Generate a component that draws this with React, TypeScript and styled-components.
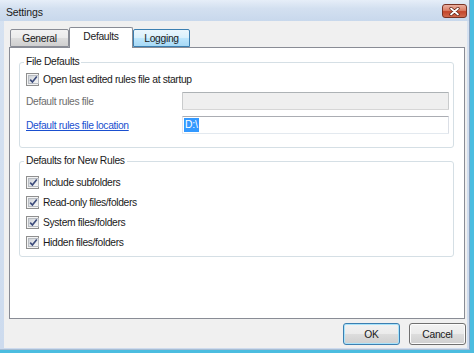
import React from "react";
import styled, { createGlobalStyle } from "styled-components";

const Global = createGlobalStyle`
  html, body { margin: 0; padding: 0; background: #4bbde0; }
  body { font-family: "Liberation Sans", Arial, sans-serif; }
  * { box-sizing: border-box; }
`;

const Desktop = styled.div`
  width: 474px;
  height: 353px;
  background: #4bbde0;
  overflow: hidden;
`;

const Window = styled.div`
  width: 470px;
  height: 350px;
  display: flex;
  flex-direction: column;
  background: linear-gradient(180deg, #d6e2f1 0%, #cddbee 100%);
  border-right: 1px solid #8aa3bf;
  border-bottom: 1px solid #a9bdd3;
  border-top-left-radius: 4px;
`;

const TitleBar = styled.div`
  height: 21px;
  flex: none;
  display: flex;
  align-items: flex-start;
  justify-content: space-between;
  padding: 0 2px 0 6px;
  background: linear-gradient(180deg, #e6eef8 0%, #d3e0f0 40%, #c8d8ec 100%);
`;

const Title = styled.span`
  font-size: 10.5px;
  line-height: 12px;
  letter-spacing: -0.15px;
  margin-top: 6px;
  color: #1a1a1a;
`;

const CloseButton = styled.div`
  width: 25px;
  height: 14px;
  margin-top: 4px;
  border: 1px solid #7a3324;
  border-radius: 3px;
  background: linear-gradient(180deg, #eab0a1 0%, #dc7f67 45%, #c4452a 55%, #d06a4e 100%);
  display: flex;
  align-items: center;
  justify-content: center;
`;

const Body = styled.div`
  flex: 1;
  margin: 0 2px 1px 4px;
  background: #f0f0f0;
  display: flex;
  flex-direction: column;
  padding: 6px 1px 0 5px;
`;

const TabStrip = styled.div`
  height: 21px;
  margin-bottom: -1px;
  display: flex;
  align-items: flex-end;
  padding-left: 1px;
  position: relative;
  z-index: 1;
`;

const Tab = styled.div<{ $w: number; $active?: boolean; $hover?: boolean }>`
  width: ${(p) => p.$w}px;
  height: ${(p) => (p.$active ? 21 : 18)}px;
  margin-bottom: ${(p) => (p.$active ? 0 : 1)}px;
  display: flex;
  align-items: center;
  justify-content: center;
  padding-bottom: ${(p) => (p.$active ? 3 : 0)}px;
  font-size: 10.3px;
  letter-spacing: -0.3px;
  color: #1a1a1a;
  border: 1px solid ${(p) => (p.$hover ? "#3c7fb1" : "#898c95")};
  border-bottom: ${(p) => (p.$active ? "none" : "")};
  border-radius: 2px 2px 0 0;
  background: ${(p) =>
    p.$active
      ? "#ffffff"
      : p.$hover
      ? "linear-gradient(180deg, #eaf6fd 0%, #d9f0fc 50%, #bee6fd 51%, #a7d9f5 100%)"
      : "linear-gradient(180deg, #f2f2f2 0%, #ebebeb 50%, #dddddd 51%, #cfcfcf 100%)"};
`;

const TabPanel = styled.div`
  height: 272px;
  margin-right: 1px;
  background: #ffffff;
  border: 1px solid #898c95;
  padding: 0 10px 0 9px;
  display: flex;
  flex-direction: column;
`;

const Group = styled.fieldset<{ $mt: number }>`
  margin: ${(p) => p.$mt}px 0 0 0;
  padding: 0;
  min-width: 0;
  border: 1px solid #d5dfe5;
  border-radius: 3px;
`;

const Legend = styled.legend`
  margin-left: 4px;
  padding: 0 2px;
  font-size: 10.3px;
  line-height: 12px;
  letter-spacing: -0.3px;
  color: #1a1a1a;
`;

const FileGrid = styled.div`
  display: grid;
  grid-template-columns: 156px 1fr;
  grid-auto-rows: auto;
  row-gap: 6px;
  align-items: center;
  padding: 4px 4px 13px 6px;
`;

const RuleList = styled.div`
  display: flex;
  flex-direction: column;
  gap: 6px;
  padding: 8px 4px 7px 6px;
`;

const CheckRow = styled.label<{ $span?: boolean }>`
  grid-column: ${(p) => (p.$span ? "1 / span 2" : "auto")};
  height: 14px;
  display: flex;
  align-items: center;
  gap: 4px;
  font-size: 10.3px;
  letter-spacing: -0.35px;
  color: #1a1a1a;
`;

const Box = styled.span`
  width: 13px;
  height: 13px;
  flex: none;
  border: 1px solid #8f8f8f;
  background: #f4f4f4;
  padding: 1px;
  display: flex;
`;

const BoxInner = styled.span`
  flex: 1;
  background: linear-gradient(135deg, #cfd3d8 0%, #e8eaec 60%, #f7f7f7 100%);
  border: 1px solid #b8bcc2;
  display: flex;
  align-items: center;
  justify-content: center;
`;

const FieldLabel = styled.span<{ $muted?: boolean; $link?: boolean }>`
  font-size: 10.3px;
  letter-spacing: -0.35px;
  color: ${(p) => (p.$muted ? "#6d6d6d" : p.$link ? "#1a4fcf" : "#1a1a1a")};
  text-decoration: ${(p) => (p.$link ? "underline" : "none")};
`;

const TextField = styled.div<{ $disabled?: boolean }>`
  height: 18px;
  display: flex;
  align-items: center;
  padding: 0 1px;
  background: ${(p) => (p.$disabled ? "#efefef" : "#ffffff")};
  border: 1px solid;
  border-color: ${(p) =>
    p.$disabled ? "#adb2b5 #c9cbcc #d6d6d6 #c9cbcc" : "#abadb3 #dbdfe6 #e3e9ef #e2e3ea"};
  border-radius: 1px;
  font-size: 10.3px;
  letter-spacing: -0.2px;
`;

const Selected = styled.span`
  background: #3399ff;
  color: #ffffff;
  line-height: 14px;
  padding: 0 1px;
`;

const ButtonRow = styled.div`
  display: flex;
  justify-content: flex-end;
  gap: 9px;
  padding-top: 4px;
`;

const Button = styled.div<{ $default?: boolean }>`
  width: 57px;
  height: 22px;
  display: flex;
  align-items: center;
  justify-content: center;
  font-size: 10.3px;
  letter-spacing: -0.3px;
  color: #1a1a1a;
  border: 1px solid ${(p) => (p.$default ? "#3c7fb1" : "#707070")};
  border-radius: 3px;
  box-shadow: inset 0 0 0 1px ${(p) => (p.$default ? "#a8e3fb" : "#fcfcfc")};
  background: linear-gradient(180deg, #f2f2f2 0%, #ebebeb 50%, #dddddd 51%, #cfcfcf 100%);
`;

const Check = () => (
  <Box>
    <BoxInner>
      <svg width="9" height="9" viewBox="0 0 9 9">
        <path d="M1.2 4.6 L3.4 7 L7.8 1.4" fill="none" stroke="#3b4a7a" strokeWidth="1.6" />
      </svg>
    </BoxInner>
  </Box>
);

export default function App() {
  return (
    <>
      <Global />
      <Desktop>
        <Window>
          <TitleBar>
            <Title>Settings</Title>
            <CloseButton>
              <svg width="11" height="9" viewBox="0 0 11 9">
                <path d="M2 1.5 L9 7.5 M9 1.5 L2 7.5" stroke="#5a1d12" strokeWidth="3.2" strokeLinecap="round" />
                <path d="M2 1.5 L9 7.5 M9 1.5 L2 7.5" stroke="#ffffff" strokeWidth="1.8" strokeLinecap="round" />
              </svg>
            </CloseButton>
          </TitleBar>
          <Body>
            <TabStrip>
              <Tab $w={59}>General</Tab>
              <Tab $w={64} $active>Defaults</Tab>
              <Tab $w={57} $hover>Logging</Tab>
            </TabStrip>
            <TabPanel>
              <Group $mt={8}>
                <Legend>File Defaults</Legend>
                <FileGrid>
                  <CheckRow $span>
                    <Check />
                    Open last edited rules file at startup
                  </CheckRow>
                  <FieldLabel $muted>Default rules file</FieldLabel>
                  <TextField $disabled />
                  <FieldLabel $link>Default rules file location</FieldLabel>
                  <TextField>
                    <Selected>D:\</Selected>
                  </TextField>
                </FileGrid>
              </Group>
              <Group $mt={7}>
                <Legend>Defaults for New Rules</Legend>
                <RuleList>
                  <CheckRow>
                    <Check />
                    Include subfolders
                  </CheckRow>
                  <CheckRow>
                    <Check />
                    Read-only files/folders
                  </CheckRow>
                  <CheckRow>
                    <Check />
                    System files/folders
                  </CheckRow>
                  <CheckRow>
                    <Check />
                    Hidden files/folders
                  </CheckRow>
                </RuleList>
              </Group>
            </TabPanel>
            <ButtonRow>
              <Button $default>OK</Button>
              <Button>Cancel</Button>
            </ButtonRow>
          </Body>
        </Window>
      </Desktop>
    </>
  );
}
